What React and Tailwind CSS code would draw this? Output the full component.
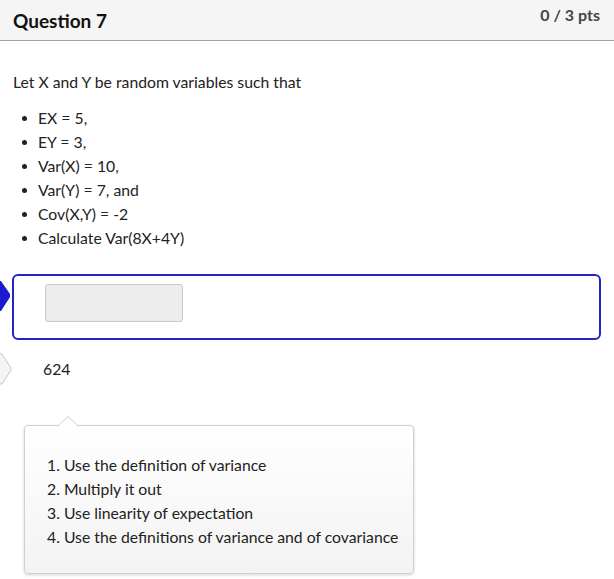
export default function App() {
  const items = ["EX = 5,", "EY = 3,", "Var(X) = 10,", "Var(Y) = 7, and", "Cov(X,Y) = -2", "Calculate Var(8X+4Y)"];
  const hints = [
    "1. Use the definition of variance",
    "2. Multiply it out",
    "3. Use linearity of expectation",
    "4. Use the definitions of variance and of covariance",
  ];
  return (
    <div className="w-[614px] h-[579px] bg-white text-[#222] overflow-hidden" style={{ fontFamily: "Lato, 'Liberation Sans', sans-serif" }}>
      <div className="h-[41px] bg-[#f5f5f5] border-b border-[#a0a0a0] flex justify-between pl-[13px] pr-[14px]">
        <div className="pt-[7px] text-[19px] font-bold text-[#111]">Question 7</div>
        <div className="pt-[3px] text-[16px] font-bold text-[#444]">0 / 3 pts</div>
      </div>
      <div className="pl-[13px] pt-[29px] text-[15.75px]">
        <p className="leading-[24px]">Let X and Y be random variables such that</p>
        <ul className="mt-[12px] pl-[9px]">
          {items.map((t) => (
            <li key={t} className="flex items-center leading-[24px]">
              <span className="w-[5px] h-[5px] rounded-full bg-[#222] mr-[11px]"></span>
              {t}
            </li>
          ))}
        </ul>
      </div>
      <div className="relative mt-[24px]">
        <svg className="absolute left-0 top-[7px]" width="12" height="30" viewBox="0 0 12 30">
          <path d="M0 0 L1 0 L10 13 L10 16 L1 30 L0 30 Z" fill="#1a1ad0" />
        </svg>
        <div className="ml-[12px] w-[589px] h-[66px] border-2 border-[#2424c6] rounded-[6px] pl-[31px] pt-[8px]">
          <div className="w-[138px] h-[38px] bg-[#ececec] border border-[#c8c8c8] rounded-[3px]"></div>
        </div>
      </div>
      <div className="relative mt-[13px] h-[32px]">
        <svg className="absolute left-0 top-[0px]" width="14" height="32" viewBox="0 0 14 32">
          <path d="M0 1 L2 1 L11 15 L11 17 L2 31 L0 31" fill="#f4f4f4" stroke="#c8c8c8" strokeWidth="1" />
        </svg>
        <div className="pl-[43px] pt-[6px] text-[15.75px] leading-[20px]">624</div>
      </div>
      <div className="relative mt-[40px] ml-[24px] w-[390px]">
        <svg className="absolute left-[34px] top-[-9px] z-10" width="20" height="11" viewBox="0 0 20 11">
          <path d="M0 10 L10 0.5 L20 10 L20 11 L0 11 Z" fill="#fff" />
          <path d="M0 10 L10 0.5 L20 10" fill="none" stroke="#cfcfcf" strokeWidth="1" />
        </svg>
        <div className="h-[149px] border border-[#cfcfcf] rounded-[4px] bg-gradient-to-b from-white to-[#f3f3f3] shadow-[0_1px_3px_rgba(0,0,0,0.18)] pl-[22px] pt-[27px] text-[15.75px]">
          {hints.map((h) => (
            <div key={h} className="leading-[24px]">{h}</div>
          ))}
        </div>
      </div>
    </div>
  );
}
